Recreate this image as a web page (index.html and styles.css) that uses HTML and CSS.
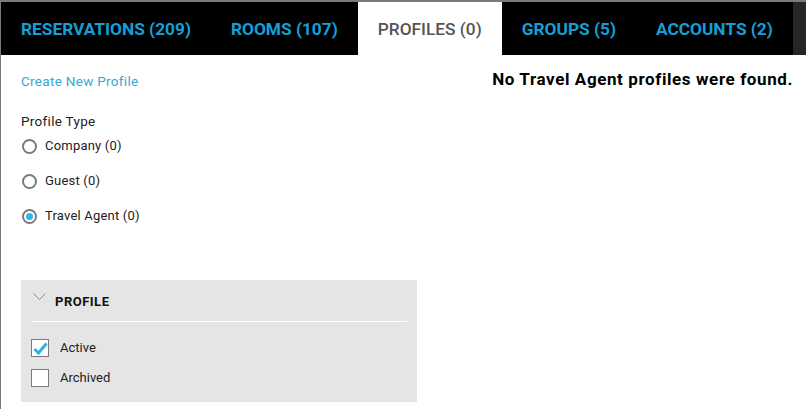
FILE: index.html
```html
<!DOCTYPE html>
<html>
<head>
<meta charset="utf-8">
<link rel="stylesheet" href="styles.css">
</head>
<body>
<div class="page">
  <nav class="tabs">
    <a class="tab">RESERVATIONS (209)</a>
    <a class="tab">ROOMS (107)</a>
    <a class="tab active">PROFILES (0)</a>
    <a class="tab">GROUPS (5)</a>
    <a class="tab">ACCOUNTS (2)</a>
  </nav>
  <div class="content">
    <div class="side">
      <a class="create">Create New Profile</a>
      <div class="type-label">Profile Type</div>
      <div class="radios">
        <label class="radio"><span class="dot"></span>Company (0)</label>
        <label class="radio"><span class="dot"></span>Guest (0)</label>
        <label class="radio checked"><span class="dot"></span>Travel Agent (0)</label>
      </div>
      <section class="panel">
        <header class="panel-head">
          <svg class="chev" width="13" height="8" viewBox="0 0 13 8"><polyline points="0.5,0.5 6.5,6.5 12.5,0.5" fill="none" stroke="#8a8a8a" stroke-width="1"/></svg>
          <span class="panel-title">PROFILE</span>
        </header>
        <div class="checks">
          <label class="check checked"><span class="box"><svg width="15" height="13" viewBox="0 0 15 13"><path d="M1.5 7 L5.5 11 L13.5 1.5" fill="none" stroke="#2ab3e3" stroke-width="3"/></svg></span>Active</label>
          <label class="check"><span class="box"></span>Archived</label>
        </div>
      </section>
    </div>
    <div class="main">
      <p class="empty">No Travel Agent profiles were found.</p>
    </div>
  </div>
</div>
</body>
</html>
```
FILE: styles.css
```css
html, body {
  margin: 0;
  padding: 0;
  background: #fff;
}
body {
  font-family: Roboto, "DejaVu Sans", sans-serif;
  color: #222;
}
.page {
  border-top: 2px solid #7a7a7a;
  border-left: 1px solid #7a7a7a;
  height: 409px;
  box-sizing: border-box;
}
.tabs {
  display: flex;
  background: #262626;
  height: 53px;
}
.tab {
  display: flex;
  align-items: center;
  padding: 1px 20px 0;
  background: #000;
  color: #149fd6;
  font-weight: 700;
  font-size: 17.3px;
  white-space: nowrap;
}
.tab.active {
  background: #fff;
  color: #555;
  font-weight: 500;
}
.content {
  display: flex;
}
.side {
  width: 396px;
  padding-left: 20px;
  display: flex;
  flex-direction: column;
}
.create {
  margin-top: 18px;
  font-size: 13.5px;
  letter-spacing: 0.3px;
  color: #3aa6d3;
  line-height: 16px;
}
.type-label {
  margin-top: 24px;
  font-size: 13.5px;
  letter-spacing: 0.3px;
  line-height: 16px;
  color: #222;
}
.radios {
  display: flex;
  flex-direction: column;
  gap: 19px;
  margin-top: 9px;
}
.radio {
  display: flex;
  align-items: center;
  font-size: 13px;
  letter-spacing: 0.2px;
  line-height: 16px;
  gap: 8px;
  color: #222;
}
.dot {
  width: 15px;
  height: 15px;
  box-sizing: border-box;
  border: 2px solid #7a7a7a;
  border-radius: 50%;
  margin-left: 1px;
  display: flex;
  align-items: center;
  justify-content: center;
}
.radio.checked .dot::after {
  content: "";
  width: 7px;
  height: 7px;
  border-radius: 50%;
  background: #2ab8eb;
}
.panel {
  margin-top: 56px;
  background: #e5e5e5;
  height: 122px;
  padding: 0 10px;
  box-sizing: border-box;
}
.panel-head {
  display: flex;
  align-items: center;
  height: 41px;
  border-bottom: 1px solid #fff;
  position: relative;
}
.chev {
  position: absolute;
  left: 2px;
  top: 13px;
}
.panel-title {
  margin-left: 24px;
  margin-top: 2px;
  font-weight: 700;
  font-size: 13px;
  letter-spacing: 0.5px;
  color: #111;
}
.checks {
  display: flex;
  flex-direction: column;
  gap: 12px;
  padding-top: 17px;
}
.check {
  display: flex;
  align-items: center;
  gap: 11px;
  font-size: 13px;
  line-height: 18px;
  color: #222;
}
.box {
  width: 18px;
  height: 18px;
  box-sizing: border-box;
  border: 1px solid #7a7a7a;
  background: #fff;
  display: flex;
  align-items: center;
  justify-content: center;
}
.main {
  flex: 1;
  text-align: right;
  padding-right: 13px;
}
.empty {
  margin: 15px 0 0;
  font-size: 17px;
  letter-spacing: 0.6px;
  font-weight: 700;
  color: #000;
  line-height: 18px;
}
```
